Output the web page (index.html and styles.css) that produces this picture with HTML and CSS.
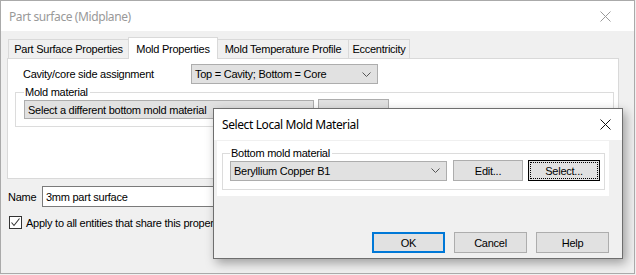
FILE: index.html
```html
<!DOCTYPE html>
<html lang="en">
<head>
    <meta charset="UTF-8">
    <title>Part surface (Midplane)</title>
    <link rel="stylesheet" href="styles.css">
</head>
<body>
    <div class="window">
        <div class="titlebar inactive">
            <span class="title">Part surface (Midplane)</span>
            <svg class="close" width="11" height="11" viewBox="0 0 11 11"><path d="M0.5 0.5 L10.5 10.5 M10.5 0.5 L0.5 10.5" stroke="#9a9a9a" stroke-width="1"/></svg>
        </div>

        <div class="content">
            <div class="tabs">
                <div class="tab t1">Part Surface Properties</div>
                <div class="tab t2 selected">Mold Properties</div>
                <div class="tab t3">Mold Temperature Profile</div>
                <div class="tab t4">Eccentricity</div>
            </div>

            <div class="tab-panel">
                <div class="row side-row">
                    <label class="side-label">Cavity/core side assignment</label>
                    <div class="combo side-combo">
                        <span>Top = Cavity; Bottom = Core</span>
                        <svg class="chev" width="9" height="5" viewBox="0 0 9 5"><path d="M0.5 0.5 L4.5 4.5 L8.5 0.5" fill="none" stroke="#555" stroke-width="1"/></svg>
                    </div>
                </div>

                <fieldset class="group mold-group">
                    <legend>Mold material</legend>
                    <div class="row">
                        <div class="combo material-combo"><span>Select a different bottom mold material</span></div>
                        <div class="btn hidden-btn"></div>
                    </div>
                </fieldset>
            </div>

            <div class="row name-row">
                <label class="name-label">Name</label>
                <div class="textbox">3mm part surface</div>
            </div>

            <div class="row check-row">
                <span class="checkbox">
                    <svg width="11" height="11" viewBox="0 0 11 11"><path d="M1.5 5.5 L4 8.5 L9.5 1.5" fill="none" stroke="#333" stroke-width="1.1"/></svg>
                </span>
                <span>Apply to all entities that share this property</span>
            </div>
        </div>

        <div class="dialog">
            <div class="titlebar">
                <span class="title">Select Local Mold Material</span>
                <svg class="close" width="11" height="11" viewBox="0 0 11 11"><path d="M0.5 0.5 L10.5 10.5 M10.5 0.5 L0.5 10.5" stroke="#111" stroke-width="1"/></svg>
            </div>
            <div class="dialog-body">
                <div class="inner-panel">
                    <fieldset class="group bottom-group">
                        <legend>Bottom mold material</legend>
                        <div class="row">
                            <div class="combo bottom-combo">
                                <span>Beryllium Copper B1</span>
                                <svg class="chev" width="9" height="5" viewBox="0 0 9 5"><path d="M0.5 0.5 L4.5 4.5 L8.5 0.5" fill="none" stroke="#555" stroke-width="1"/></svg>
                            </div>
                            <div class="btn edit-btn">Edit...</div>
                            <div class="btn focus-btn"><span>Select...</span></div>
                        </div>
                    </fieldset>
                </div>
                <div class="buttons">
                    <div class="btn default-btn">OK</div>
                    <div class="btn">Cancel</div>
                    <div class="btn">Help</div>
                </div>
            </div>
        </div>
    </div>
</body>
</html>
```

FILE: styles.css
```css
* {
    margin: 0;
    padding: 0;
    box-sizing: border-box;
}

body {
    font-family: "Liberation Sans", Arial, sans-serif;
    font-size: 11px;
    letter-spacing: -0.25px;
    color: #000;
    background: #f0f0f0;
}

.window {
    position: relative;
    width: 635px;
    height: 274px;
    border: 1px solid #aaaaaa;
    background: #f0f0f0;
    overflow: hidden;
}

.titlebar {
    height: 30px;
    background: #ffffff;
    display: flex;
    align-items: center;
    justify-content: space-between;
    padding: 0 23px 0 8px;
}

.title {
    font-family: "Noto Sans", sans-serif;
    font-size: 12px;
    letter-spacing: -0.4px;
}

.inactive .title {
    color: #999999;
}

.close {
    display: block;
}

.content {
    padding: 6px 0 0 6px;
}

.tabs {
    display: flex;
    align-items: flex-end;
    height: 21px;
    padding-left: 1px;
}

.tab {
    height: 19px;
    background: #f0f0f0;
    border: 1px solid #d9d9d9;
    border-bottom: none;
    display: flex;
    align-items: center;
    justify-content: center;
    margin-right: -1px;
}

.t1 { width: 121px; }
.t2 { width: 90px; }
.t3 { width: 132px; }
.t4 { width: 62px; }

.tab.selected {
    background: #ffffff;
    position: relative;
    z-index: 1;
    margin-bottom: -1px;
    height: 22px;
}

.tab-panel {
    width: 612px;
    height: 121px;
    background: #ffffff;
    border: 1px solid #d9d9d9;
    padding: 5px 5px 0 7px;
}

.row {
    display: flex;
    align-items: center;
}

.side-label {
    width: 176px;
    padding-left: 8px;
}

.combo {
    height: 20px;
    background: #e1e1e1;
    border: 1px solid #adadad;
    display: flex;
    align-items: center;
    justify-content: space-between;
    padding: 0 6px 0 3px;
}

.side-combo {
    width: 187px;
}

.chev {
    display: block;
}

.group {
    border: 1px solid #dcdcdc;
    padding: 0 8px 6px 8px;
}

.group legend {
    padding: 0 2px 0 1px;
    margin-left: 0;
    line-height: 13px;
}

.mold-group {
    margin-top: 2px;
    width: 599px;
}

.material-combo {
    width: 290px;
    height: 19px;
}

.btn {
    height: 21px;
    background: #e1e1e1;
    border: 1px solid #adadad;
    display: flex;
    align-items: center;
    justify-content: center;
}

.hidden-btn {
    width: 71px;
    margin-left: 4px;
}

.name-row {
    margin-top: 7px;
}

.name-label {
    width: 35px;
    padding-left: 1px;
}

.textbox {
    width: 400px;
    height: 21px;
    background: #ffffff;
    border: 1px solid #7a7a7a;
    padding: 0 3px;
    display: flex;
    align-items: center;
}

.check-row {
    margin-top: 9px;
    padding-left: 2px;
}

.checkbox {
    width: 13px;
    height: 13px;
    border: 1px solid #333333;
    background: #ffffff;
    margin-right: 4px;
    display: flex;
    align-items: center;
    justify-content: center;
}

.dialog {
    position: absolute;
    left: 212px;
    top: 107px;
    width: 410px;
    height: 151px;
    border: 1px solid #6e6e6e;
    background: #f0f0f0;
    box-shadow: 3px 4px 10px rgba(0, 0, 0, 0.35);
    z-index: 5;
}

.dialog .titlebar {
    height: 31px;
    padding-right: 11px;
}

.dialog .title {
    color: #000;
}

.dialog-body {
    padding: 1px 13px 0 3px;
}

.inner-panel {
    background: #ffffff;
    height: 55px;
    padding: 6px 4px 0 5px;
}

.bottom-group {
    width: 382px;
    height: 43px;
    padding: 0 4px 0 7px;
}

.bottom-combo {
    width: 217px;
    height: 20px;
}

.edit-btn {
    width: 70px;
    margin-left: 6px;
}

.focus-btn {
    width: 72px;
    margin-left: 5px;
    border: 1px solid #000;
    padding: 1px;
}

.focus-btn span {
    width: 100%;
    height: 100%;
    border: 1px dotted #000;
    display: flex;
    align-items: center;
    justify-content: center;
}

.buttons {
    display: flex;
    justify-content: flex-end;
    gap: 9px;
    margin-top: 36px;
}

.buttons .btn {
    width: 73px;
    height: 21px;
}

.default-btn {
    border: 2px solid #0078d7;
}
```
